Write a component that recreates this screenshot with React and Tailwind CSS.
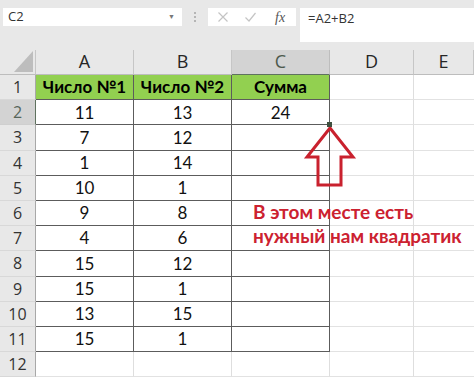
import React from 'react';

const rows = [
  ['11', '13', '24'],
  ['7', '12', ''],
  ['1', '14', ''],
  ['10', '1', ''],
  ['9', '8', ''],
  ['4', '6', ''],
  ['15', '12', ''],
  ['15', '1', ''],
  ['13', '15', ''],
  ['15', '1', ''],
];

const cellFont = { fontFamily: 'Lato, "Open Sans", sans-serif' };

function ColHeader({ label, active }) {
  return (
    <div
      className={
        'flex items-end justify-center pb-[1px] border-r border-b text-[18px] leading-none h-[25px] ' +
        (active
          ? 'bg-[#d3d3d3] text-[#4d5a4d] border-r-[#bdbdbd] border-b-[#5f725f]'
          : 'bg-[#e8e8e8] text-[#262626] border-r-[#c6c6c6] border-b-[#bdbdbd]')
      }
    >
      <span className="pb-[3px]">{label}</span>
    </div>
  );
}

function RowHeader({ n, active }) {
  return (
    <div
      className={
        'flex items-center justify-center border-r border-b h-[25.2px] text-[16px] ' +
        (active
          ? 'bg-[#d3d3d3] text-[#56655a] border-r-[#5f725f] border-b-[#cfcfcf]'
          : 'bg-[#e8e8e8] text-[#333] border-r-[#a8a8a8] border-b-[#d8d8d8]')
      }
    >
      {n}
    </div>
  );
}

export default function App() {
  return (
    <div
      className="relative w-[474px] h-[380px] overflow-hidden bg-white"
      style={{ fontFamily: '"Open Sans", "Noto Sans", sans-serif' }}
    >
      {/* formula bar */}
      <div className="h-[50px] bg-[#e8e8e8] flex items-start pt-[8px] pl-[3px]">
        <div className="w-[179px] h-[18px] bg-white flex items-center justify-between pl-[5px] pr-[7px] text-[13px] text-[#333]">
          <span>C2</span>
          <span className="text-[7px] text-[#777]">▼</span>
        </div>
        <div className="w-[26px] h-[18px] flex flex-col items-center justify-center gap-[2px]">
          <span className="w-[2px] h-[2px] bg-[#b5b5b5]" />
          <span className="w-[2px] h-[2px] bg-[#b5b5b5]" />
          <span className="w-[2px] h-[2px] bg-[#b5b5b5]" />
        </div>
        <div className="w-[88px] h-[18px] bg-white flex items-center text-[#bdbdbd]">
          <svg width="12" height="12" viewBox="0 0 12 12" className="ml-[9px]">
            <path d="M1.5 1.5 L10.5 10.5 M10.5 1.5 L1.5 10.5" stroke="#c4c4c4" strokeWidth="1.2" fill="none" />
          </svg>
          <svg width="13" height="12" viewBox="0 0 13 12" className="ml-[15px]">
            <path d="M1.5 6.5 L5 10 L11.5 2" stroke="#c4c4c4" strokeWidth="1.2" fill="none" />
          </svg>
          <span
            className="ml-[18px] text-[14px] italic text-[#555]"
            style={{ fontFamily: '"Liberation Serif", serif' }}
          >
            fx
          </span>
        </div>
        <div className="ml-[4px] flex-1 h-[34px] bg-white pl-[8px] pt-[1px] text-[13px] text-[#333]">
          =A2+B2
        </div>
      </div>

      {/* sheet grid */}
      <div className="grid grid-cols-[36px_98px_98px_98px_84px_60px]">
        <div className="h-[25px] bg-[#e8e8e8] border-r border-b border-r-[#c6c6c6] border-b-[#bdbdbd] flex items-end justify-end pr-[2px] pb-[2px]">
          <svg width="19" height="21" viewBox="0 0 19 21">
            <polygon points="19,0 19,21 0,21" fill="#bdbdbd" />
          </svg>
        </div>
        <ColHeader label="A" />
        <ColHeader label="B" />
        <ColHeader label="C" active />
        <ColHeader label="D" />
        <ColHeader label="E" />

        {/* row 1 */}
        <RowHeader n="1" />
        {['Число №1', 'Число №2', 'Сумма'].map((t) => (
          <div
            key={t}
            className="h-[25.2px] bg-[#92d050] border-r border-b border-[#5c5c5c] flex items-center justify-center text-[17px] font-bold text-black"
            style={cellFont}
          >
            {t}
          </div>
        ))}
        <div className="h-[25.2px] border-r border-b border-r-[#dedede] border-b-[#e2e2e2]" />
        <div className="h-[25.2px] border-b border-b-[#e2e2e2]" />

        {rows.map((r, i) => (
          <React.Fragment key={i}>
            <RowHeader n={String(i + 2)} active={i === 0} />
            {r.map((v, j) => (
              <div
                key={j}
                className="relative h-[25.2px] border-r border-b border-[#5c5c5c] flex items-center justify-center text-[17px] text-[#111]"
                style={cellFont}
              >
                {v}
                {i === 0 && j === 2 && (
                  <span className="absolute right-[-3px] bottom-[-3px] w-[5px] h-[5px] bg-[#3f4f3f] z-10" />
                )}
              </div>
            ))}
            <div className="h-[25.2px] border-r border-b border-r-[#dedede] border-b-[#e2e2e2]" />
            <div className="h-[25.2px] border-b border-b-[#e2e2e2]" />
          </React.Fragment>
        ))}

        {/* row 12 */}
        <RowHeader n="12" />
        <div className="h-[25.2px] border-r border-b border-r-[#dedede] border-b-[#e2e2e2]" />
        <div className="h-[25.2px] border-r border-b border-r-[#dedede] border-b-[#e2e2e2]" />
        <div className="h-[25.2px] border-r border-b border-r-[#dedede] border-b-[#e2e2e2]" />
        <div className="h-[25.2px] border-r border-b border-r-[#dedede] border-b-[#e2e2e2]" />
        <div className="h-[25.2px] border-b border-b-[#e2e2e2]" />
      </div>

      {/* annotation */}
      <svg className="absolute left-0 top-0 pointer-events-none" width="474" height="380">
        <path
          d="M330 128 L353 157 L341 157 L341 185 L318 185 L318 157 L307 157 Z"
          fill="none"
          stroke="#c9212e"
          strokeWidth="3"
          strokeLinejoin="miter"
        />
      </svg>
      <div
        className="absolute left-[253px] top-[200px] text-[19px] leading-[24px] font-bold text-[#cc2130]"
        style={cellFont}
      >
        <div>В этом месте есть</div>
        <div>нужный нам квадратик</div>
      </div>
    </div>
  );
}
